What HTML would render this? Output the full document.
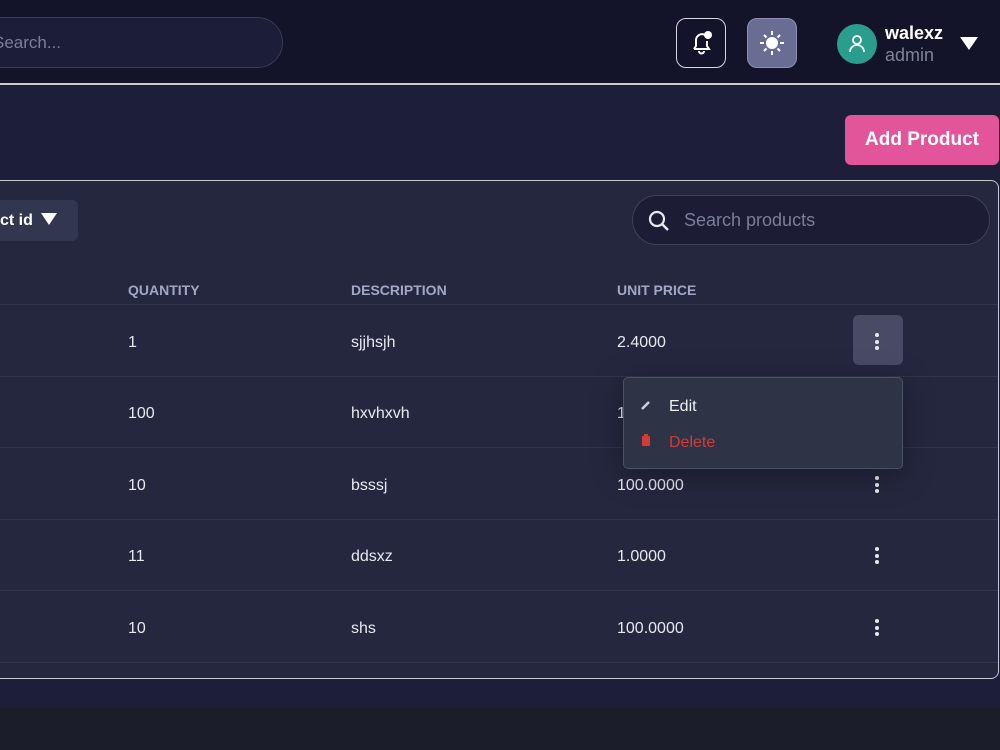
<!DOCTYPE html>
<html><head><style>
*{margin:0;padding:0;box-sizing:border-box}
body{width:1000px;height:750px;overflow:hidden;background:#1b1d2a;font-family:"Liberation Sans",sans-serif;position:relative}
.hdr{position:absolute;left:0;top:0;width:1000px;height:85px;background:#13132a;border-bottom:2px solid #c9cad3}
.main{position:absolute;left:0;top:86px;width:1000px;height:622px;background:#1d1e37}
.srch{position:absolute;left:-40px;top:17px;width:323px;height:51px;border:1px solid #3a3c55;border-radius:26px;background:#1c1d36;color:#7d7f98;font-size:17px;line-height:49px;padding-left:32px}
.ib{position:absolute;top:18px;width:50px;height:50px;border-radius:10px}
.card{position:absolute;left:-10px;top:180px;width:1009px;height:499px;background:#25273f;border:1.5px solid #c5c7d2;border-radius:8px}
.t{position:absolute;color:#e8e9f0;font-size:16px}
.th{position:absolute;top:282px;color:#a2a7c4;font-size:14px;font-weight:bold}
.ln{position:absolute;left:0;width:998px;height:1px;background:#33354d}
.dots{position:absolute;width:4px}
.dots i{display:block;width:4px;height:4px;border-radius:2px;background:#e8e9f0;margin-bottom:2.5px}
</style></head><body>
<div class="hdr">
<div class="srch">Search...</div>
<div class="ib" style="left:676px;border:1.5px solid #d6d7e0;background:#13132a">
<svg width="50" height="50" viewBox="0 0 50 50" style="position:absolute;left:-1px;top:-1px"><path d="M18 31 L20 28 V22 a6 6 0 0 1 9-5" fill="none" stroke="#fff" stroke-width="2"/><path d="M31 23 V28 L33 31 H18" fill="none" stroke="#fff" stroke-width="2"/><path d="M23 33 a2.5 2.5 0 0 0 5 0" fill="none" stroke="#fff" stroke-width="2"/><circle cx="32" cy="17" r="4" fill="#fff"/></svg></div>
<div class="ib" style="left:747px;background:#6a6d93;border:1.5px solid #8d90b0">
<svg width="50" height="50" viewBox="0 0 50 50" style="position:absolute;left:-1px;top:-1px"><circle cx="25" cy="25" r="6" fill="#fff"/><g stroke="#fff" stroke-width="2"><path d="M25 13v4M25 33v4M13 25h4M33 25h4M17 17l2.5 2.5M30.5 30.5l2.5 2.5M33 17l-2.5 2.5M19.5 30.5l-2.5 2.5"/></g></svg></div>
<div style="position:absolute;left:837px;top:24px;width:40px;height:40px;border-radius:50%;background:#2a9d8f">
<svg width="40" height="40" viewBox="0 0 40 40"><circle cx="20" cy="16" r="4" fill="none" stroke="#fff" stroke-width="1.8"/><path d="M13 28 a7 7 0 0 1 14 0" fill="none" stroke="#fff" stroke-width="1.8"/></svg></div>
<div style="position:absolute;left:885px;top:23px;color:#fff;font-weight:bold;font-size:18px">walexz</div>
<div style="position:absolute;left:885px;top:45px;color:#7d8499;font-size:18px">admin</div>
<svg style="position:absolute;left:960px;top:37px" width="18" height="14"><path d="M0 0H18L9 13Z" fill="#fff"/></svg>
</div>
<div class="main"></div>
<div style="position:absolute;left:845px;top:115px;width:154px;height:50px;background:#e2559a;border-radius:6px;color:#fff;font-weight:bold;font-size:19px;line-height:50px;text-align:center">Add Product</div>
<div class="card"></div>
<div style="position:absolute;left:-20px;top:200px;width:98px;height:41px;background:#33364f;border-radius:6px;color:#fff;font-weight:bold;font-size:16px;line-height:41px;padding-left:20px">ct id <svg width="16" height="12" style="margin-left:4px"><path d="M0 0H16L8 12Z" fill="#fff"/></svg></div>
<div style="position:absolute;left:632px;top:195px;width:358px;height:50px;border:1px solid #3f4159;border-radius:25px;background:#1c1d35;color:#7b7e98;font-size:18px;line-height:48px;padding-left:51px">Search products
<svg style="position:absolute;left:14px;top:13px" width="24" height="24"><circle cx="10" cy="10" r="7" fill="none" stroke="#e8e9f0" stroke-width="2.2"/><path d="M15 15l6 6" stroke="#e8e9f0" stroke-width="2.4"/></svg></div>
<div class="th" style="left:128px">QUANTITY</div>
<div class="th" style="left:351px">DESCRIPTION</div>
<div class="th" style="left:617px">UNIT PRICE</div>
<div class="ln" style="top:304px"></div><div class="ln" style="top:376px"></div><div class="ln" style="top:447px"></div><div class="ln" style="top:519px"></div><div class="ln" style="top:590px"></div><div class="ln" style="top:662px"></div>
<div class="t" style="left:128px;top:334px">1</div><div class="t" style="left:351px;top:334px">sjjhsjh</div><div class="t" style="left:617px;top:334px">2.4000</div>
<div class="t" style="left:128px;top:405px">100</div><div class="t" style="left:351px;top:405px">hxvhxvh</div><div class="t" style="left:617px;top:405px">1</div>
<div class="t" style="left:128px;top:477px">10</div><div class="t" style="left:351px;top:477px">bsssj</div><div class="t" style="left:617px;top:477px">100.0000</div>
<div class="t" style="left:128px;top:548px">11</div><div class="t" style="left:351px;top:548px">ddsxz</div><div class="t" style="left:617px;top:548px">1.0000</div>
<div class="t" style="left:128px;top:620px">10</div><div class="t" style="left:351px;top:620px">shs</div><div class="t" style="left:617px;top:620px">100.0000</div>
<div style="position:absolute;left:853px;top:315px;width:50px;height:50px;background:#494b65;border-radius:6px"></div>
<div class="dots" style="left:875px;top:333px"><i></i><i></i><i></i></div>
<div class="dots" style="left:875px;top:476px"><i></i><i></i><i></i></div>
<div class="dots" style="left:875px;top:547px"><i></i><i></i><i></i></div>
<div class="dots" style="left:875px;top:619px"><i></i><i></i><i></i></div>
<div style="position:absolute;left:623px;top:377px;width:280px;height:92px;background:#2e3446;border:1px solid #4c5163;border-radius:5px;box-shadow:0 6px 30px rgba(0,0,0,.35)">
<svg style="position:absolute;left:16px;top:21px" width="12" height="12"><path d="M2 10L9 3" stroke="#cfd1da" stroke-width="2.5"/></svg>
<div style="position:absolute;left:45px;top:20px;color:#eef0f5;font-size:16px">Edit</div>
<svg style="position:absolute;left:17px;top:56px" width="10" height="12"><rect x="1" y="2" width="8" height="10" rx="1" fill="#d33a3a"/><rect x="3" y="0" width="4" height="2" fill="#d33a3a"/></svg>
<div style="position:absolute;left:45px;top:56px;color:#d23b3b;font-size:16px">Delete</div>
</div>
</body></html>
